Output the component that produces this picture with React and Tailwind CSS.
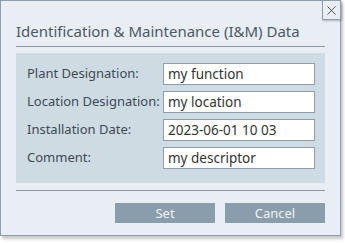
import { X } from 'lucide-react'

const champs = [
  { label: 'Plant Designation:', valeur: 'my function' },
  { label: 'Location Designation:', valeur: 'my location' },
  { label: 'Installation Date:', valeur: '2023-06-01 10 03' },
  { label: 'Comment:', valeur: 'my descriptor' },
]

export default function App() {
  return (
    <div className="w-[345px] h-[243px] bg-white" style={{ fontFamily: '"Noto Sans", "Open Sans", sans-serif' }}>
      <div className="relative w-[341px] h-[236px] bg-[#e8eef3] border border-[#8d9dab] shadow-[2px_3px_3px_rgba(0,0,0,0.22)] px-[15px]">
        {/* Bouton fermer */}
        <button className="absolute -right-[1px] -top-[1px] w-[19px] h-[20px] bg-[#e8eef3] border border-[#8d9dab] shadow-[1px_1px_2px_rgba(0,0,0,0.25)] flex items-center justify-center">
          <X size={15} strokeWidth={1.3} className="text-[#333]" />
        </button>

        {/* En-tête */}
        <h1 className="pt-[21px] pb-[6px] text-[15px] leading-[18px] text-[#4b5966] border-b border-[#8799a8]">
          Identification &amp; Maintenance (I&amp;M) Data
        </h1>

        {/* Champs */}
        <div className="mt-[6px] bg-[#cfdbe3] pt-[10px] pb-[14px] pl-[11px] pr-[10px] flex flex-col gap-[6px]">
          {champs.map(c => (
            <div key={c.label} className="flex items-center h-[22px]">
              <span className="w-[136px] text-[13px] leading-[16px] text-[#3d4a55] -mt-[3px] whitespace-nowrap">{c.label}</span>
              <div className="flex-1 h-[22px] bg-white border border-[#8d9dab] px-[4px] flex items-center text-[13.5px] text-[#333]">
                {c.valeur}
              </div>
            </div>
          ))}
        </div>

        <div className="mt-[7px] border-t border-[#8799a8]" />

        {/* Boutons */}
        <div className="mt-[12px] flex justify-end gap-[10px]">
          <button className="w-[100px] h-[20px] bg-[#8a9dac] text-[#eef2f5] text-[13px] leading-[20px]">Set</button>
          <button className="w-[100px] h-[20px] bg-[#8a9dac] text-[#eef2f5] text-[13px] leading-[20px]">Cancel</button>
        </div>
      </div>
    </div>
  )
}
